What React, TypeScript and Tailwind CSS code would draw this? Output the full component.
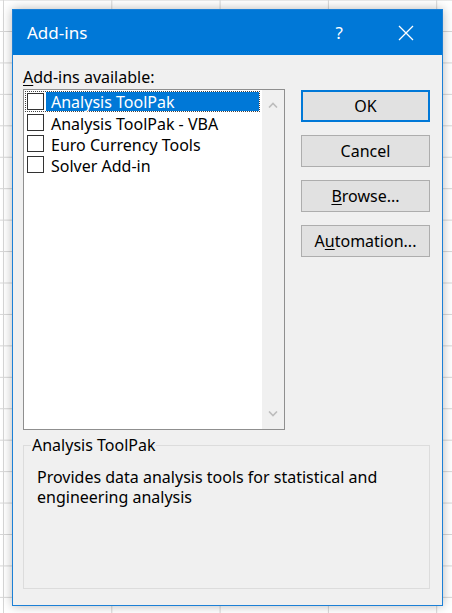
import React from "react";

const items = ["Analysis ToolPak", "Analysis ToolPak - VBA", "Euro Currency Tools", "Solver Add-in"];

function Check() {
  return <div className="w-[17px] h-[17px] shrink-0 border border-[#333] bg-white" />;
}

function Btn({ children, primary }: { children: React.ReactNode; primary?: boolean }) {
  return (
    <button
      className={
        "w-[129px] h-[32px] flex items-center justify-center bg-[#e1e1e1] text-[16px] text-black " +
        (primary ? "border-2 border-[#0078d7]" : "border border-[#adadad]")
      }
    >
      {children}
    </button>
  );
}

export default function App() {
  return (
    <div className="w-[452px] h-[613px] overflow-hidden bg-white pt-[9px] pl-[12px] [background-image:linear-gradient(to_right,#d6d6d6_1px,transparent_1px),linear-gradient(to_bottom,#d6d6d6_1px,transparent_1px)] [background-size:108.3px_31.45px] [background-position:3px_31px] font-['Noto_Sans','Open_Sans',sans-serif]">
      <div className="w-[431px] h-[597px] flex flex-col border border-[#1c80d6] bg-[#f0f0f0] shadow-[0_0_10px_rgba(0,0,0,0.28)]">
        {/* title bar */}
        <div className="h-[45px] shrink-0 bg-[#0078d7] flex items-center text-white">
          <span className="pl-[14px] text-[17px] leading-none">Add-ins</span>
          <span className="ml-auto mr-[55px] text-[17px] leading-none">?</span>
          <svg width="16" height="16" viewBox="0 0 16 16" className="mr-[28px]">
            <path d="M1 1L15 15M15 1L1 15" stroke="white" strokeWidth="1.3" />
          </svg>
        </div>

        {/* body */}
        <div className="flex-1 flex flex-col pl-[10px] pr-[12px] pt-[12px] text-black text-[16px]">
          <div className="leading-[21px] h-[22px]">
            <span className="underline underline-offset-2">A</span>dd-ins available:
          </div>
          <div className="flex gap-[16px]">
            {/* list box */}
            <div className="w-[262px] h-[341px] border border-[#8f8f8f] bg-white flex">
              <div className="flex-1 flex flex-col pl-[1px] pt-[1px] pr-[2px]">
                {items.map((t, i) =>
                  i === 0 ? (
                    <div key={t} className="h-[21px] flex items-center gap-[2px] border border-dotted border-[#444]">
                      <div className="pl-[1px] flex"><Check /></div>
                      <div className="flex-1 h-full bg-[#0078d7] text-white leading-[19px] pt-[1px] pl-[5px]">{t}</div>
                    </div>
                  ) : (
                    <div key={t} className="h-[21px] flex items-center gap-[3px] pl-[2px]">
                      <Check />
                      <div className="leading-[19px] pt-[3px] pl-[4px]">{t}</div>
                    </div>
                  )
                )}
              </div>
              {/* scrollbar */}
              <div className="w-[22px] bg-[#f0f0f0] flex flex-col justify-between items-center py-[12px]">
                <svg width="10" height="6" viewBox="0 0 10 6">
                  <path d="M1 5.5L5 1.5L9 5.5" stroke="#bdbdbd" strokeWidth="1.6" fill="none" />
                </svg>
                <svg width="10" height="6" viewBox="0 0 10 6">
                  <path d="M1 0.5L5 4.5L9 0.5" stroke="#bdbdbd" strokeWidth="1.6" fill="none" />
                </svg>
              </div>
            </div>
            {/* buttons */}
            <div className="flex flex-col gap-[13px] pt-[1px]">
              <Btn primary>OK</Btn>
              <Btn>Cancel</Btn>
              <Btn>
                <span className="underline underline-offset-2">B</span>rowse...
              </Btn>
              <Btn>
                A<span className="underline underline-offset-2">u</span>tomation...
              </Btn>
            </div>
          </div>

          {/* description group */}
          <fieldset className="mt-[5px] h-[154px] border border-[#dcdcdc] pl-[13px] pr-[8px]">
            <legend className="-ml-[6px] px-[1px] leading-[20px]">Analysis ToolPak</legend>
            <p className="mt-[12px] leading-[20px]">
              Provides data analysis tools for statistical and engineering analysis
            </p>
          </fieldset>
        </div>
      </div>
    </div>
  );
}
